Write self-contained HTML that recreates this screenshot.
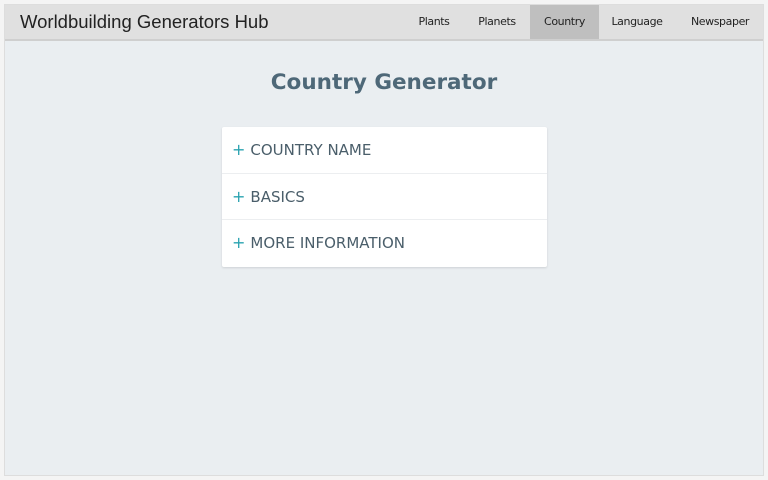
<!DOCTYPE html>
<html><head><style>
*{margin:0;padding:0;box-sizing:border-box}
body{width:768px;height:480px;background:#f4f4f4;font-family:"DejaVu Sans",sans-serif;overflow:hidden}
.frame{position:absolute;left:4px;top:4px;width:760px;height:472px;background:#eaeef1;border:1px solid #ddd}
.hdr{position:absolute;left:0;top:0;width:758px;height:36px;background:#e0e0e0;border-bottom:2px solid #cfcfcf}
.title{position:absolute;left:15px;top:6px;font-family:"Liberation Sans",sans-serif;font-size:18.5px;color:#222}
.nav{position:absolute;top:0;height:34px;font-size:11px;color:#222;line-height:34px;text-align:center;font-family:"DejaVu Sans",sans-serif;letter-spacing:-0.4px}
h1{position:absolute;left:0;width:758px;top:65px;text-align:center;font-size:21.5px;font-weight:bold;color:#4e6878}
.card{position:absolute;left:217px;top:122px;width:325px;height:140px;background:#fff;border-radius:2px;box-shadow:0 1px 2px rgba(0,0,0,.12)}
.row{height:46.5px;border-bottom:1px solid #eceef0;line-height:46px;padding-left:10px;font-size:15px;color:#4a5e6a}
.row:last-child{border-bottom:none}
.row span{color:#2aa3b0;font-size:16px;margin-right:5px}
</style></head><body>
<div class="frame">
<div class="hdr">
<div class="title">Worldbuilding Generators Hub</div>
<div class="nav" style="left:400px;width:58px">Plants</div>
<div class="nav" style="left:462px;width:60px">Planets</div>
<div class="nav" style="left:525px;width:69px;background:#bfbfbf">Country</div>
<div class="nav" style="left:599px;width:66px">Language</div>
<div class="nav" style="left:677px;width:76px">Newspaper</div>
</div>
<h1>Country Generator</h1>
<div class="card">
<div class="row"><span>+</span>COUNTRY NAME</div>
<div class="row"><span>+</span>BASICS</div>
<div class="row"><span>+</span>MORE INFORMATION</div>
</div>
</div>
</body></html>
